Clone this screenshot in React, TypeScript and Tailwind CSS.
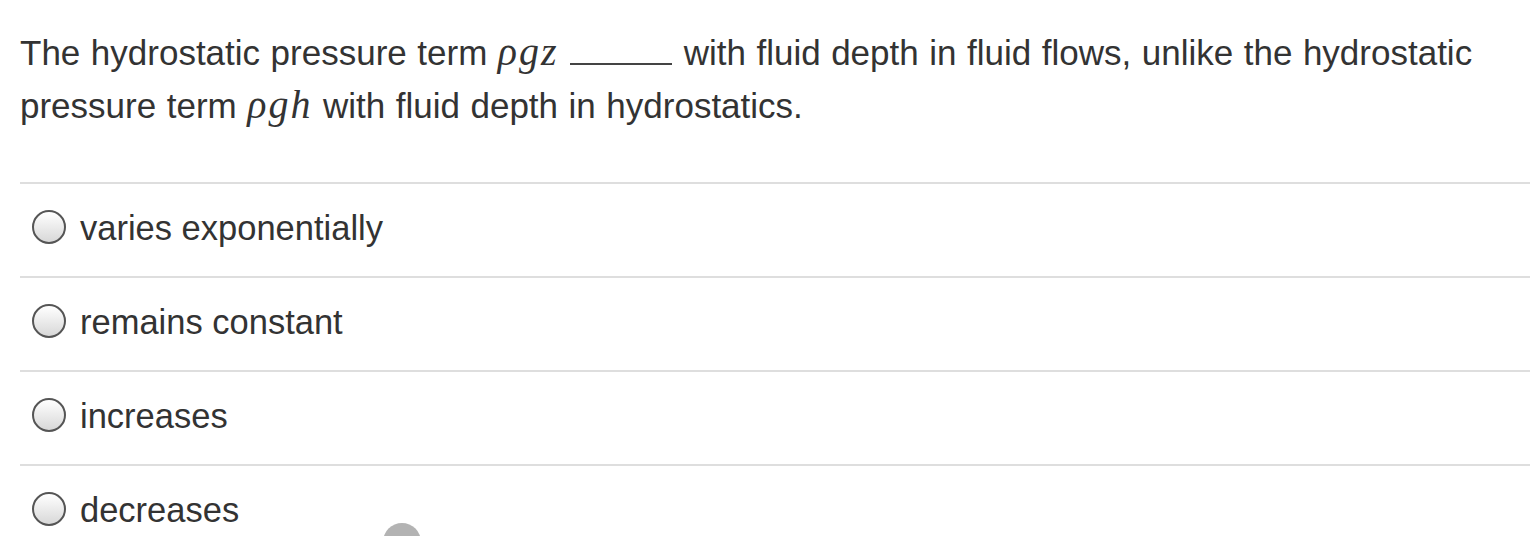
const options = ["varies exponentially", "remains constant", "increases", "decreases"];

function Math({ children }: { children: React.ReactNode }) {
  return (
    <span className="italic text-[40px] leading-none font-['Liberation_Serif',serif] tracking-[2px]">{children}</span>
  );
}

function Radio() {
  return (
    <span className="shrink-0 w-[34px] h-[34px] rounded-full border-2 border-[#555] bg-gradient-to-b from-white to-[#d8d8d8]" />
  );
}

export default function App() {
  return (
    <div className="relative h-[536px] overflow-hidden bg-white text-[#333] font-['Liberation_Sans',Arial,sans-serif]">
      <p className="pl-[20px] pr-[40px] pt-[26px] text-[35px] leading-[53px] [word-spacing:0.8px]">
        The hydrostatic pressure term <Math>ρgz</Math>{" "}
        <span className="inline-block w-[102px] h-[30px] border-b-2 border-[#444] align-baseline mx-[1px]" />{" "}
        with fluid depth in fluid flows, unlike the hydrostatic pressure term <Math>ρgh</Math> with fluid depth in
        hydrostatics.
      </p>

      <div className="mt-[50px] ml-[20px]">
        {options.map((o) => (
          <div key={o} className="flex items-center gap-[14px] h-[94px] border-t-2 border-[#dedede] pl-[12px] pb-[6px]">
            <Radio />
            <span className="text-[34.5px] leading-[40px] pt-[2px]">{o}</span>
          </div>
        ))}
      </div>

      <span className="absolute left-[383px] top-[523px] w-[38px] h-[38px] rounded-full bg-[#b3b3b3]" />
    </div>
  );
}
